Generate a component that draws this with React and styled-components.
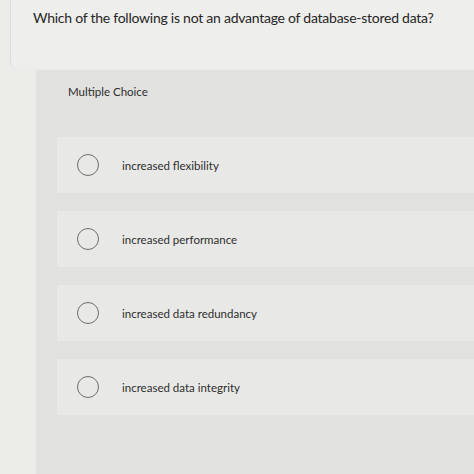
import React from "react";
import styled, { createGlobalStyle } from "styled-components";

const GlobalStyle = createGlobalStyle`
  html, body {
    margin: 0;
    padding: 0;
    background: #ebebe9;
  }
  body {
    font-family: "Lato", "Open Sans", sans-serif;
    color: #2b2b2b;
  }
`;

const options = [
  "increased flexibility",
  "increased performance",
  "increased data redundancy",
  "increased data integrity",
];

const App = () => {
  return (
    <Page>
      <GlobalStyle />
      <QuestionCard>
        <Question>
          Which of the following is not an advantage of database-stored data?
        </Question>
      </QuestionCard>
      <Panel>
        <Label>Multiple Choice</Label>
        <List>
          {options.map((text) => (
            <Option key={text}>
              <Radio />
              <OptionText>{text}</OptionText>
            </Option>
          ))}
        </List>
      </Panel>
    </Page>
  );
};

export default App;

const Page = styled.div`
  width: 474px;
  height: 474px;
  overflow: hidden;
  display: flex;
  flex-direction: column;
  background: #ecece9;
`;

const QuestionCard = styled.div`
  height: 68px;
  margin-left: 10px;
  box-sizing: border-box;
  padding: 8px 0 0 22px;
  border-left: 1px solid #dcdcd9;
  border-bottom-left-radius: 6px;
  background: #eeeeec;
`;

const Question = styled.div`
  font-size: 14px;
  line-height: 20px;
  color: #262626;
  letter-spacing: -0.25px;
  white-space: nowrap;
`;

const Panel = styled.div`
  flex: 1;
  margin-left: 36px;
  margin-top: 2px;
  padding-top: 14px;
  background: #e1e1df;
`;

const Label = styled.div`
  margin-left: 32px;
  font-size: 11.5px;
  line-height: 16px;
  color: #2e2e2e;
`;

const List = styled.div`
  margin-top: 37px;
  margin-left: 21px;
  display: flex;
  flex-direction: column;
  gap: 18px;
`;

const Option = styled.div`
  height: 56px;
  display: flex;
  align-items: center;
  padding-left: 20px;
  background: #e8e8e6;
`;

const Radio = styled.span`
  width: 20px;
  height: 20px;
  border-radius: 50%;
  border: 1.5px solid #6e6e6e;
  flex-shrink: 0;
`;

const OptionText = styled.span`
  margin-left: 23px;
  font-size: 11.5px;
  color: #2e2e2e;
`;
